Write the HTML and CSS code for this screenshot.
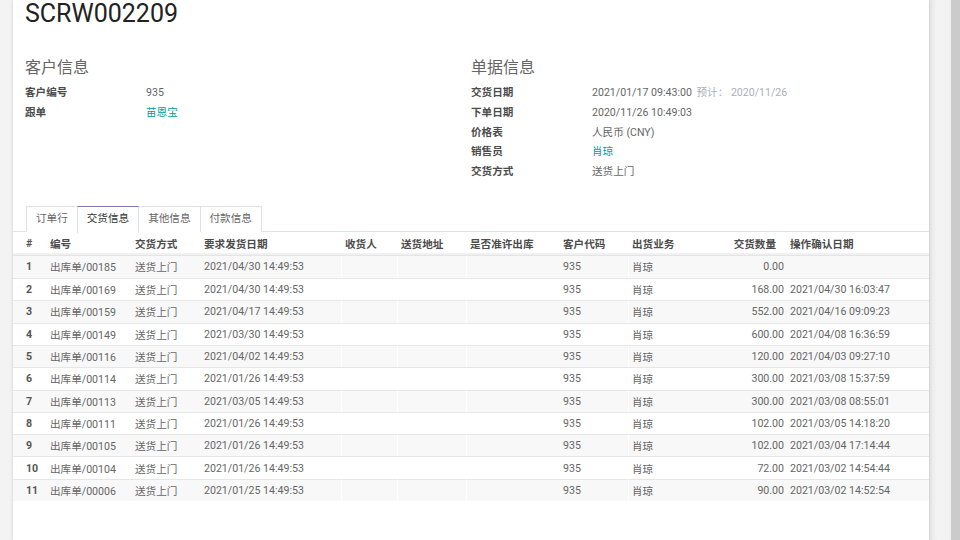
FILE: index.html
```html
<!DOCTYPE html>
<html lang="zh-CN">
<head>
<meta charset="utf-8">
<title>SCRW002209</title>
<link rel="stylesheet" href="styles.css">
</head>
<body>
<div class="frame">
  <div class="gutter-left"></div>
  <main class="sheet">
    <h1 class="title">SCRW002209</h1>
    <div class="groups">
      <section class="group">
        <h2 class="group-title">客户信息</h2>
        <div class="field"><span class="label">客户编号</span><span class="value">935</span></div>
        <div class="field"><span class="label">跟单</span><span class="value link">苗恩宝</span></div>
      </section>
      <section class="group">
        <h2 class="group-title">单据信息</h2>
        <div class="field"><span class="label">交货日期</span><span class="value">2021/01/17 09:43:00 <span class="muted">预计：&nbsp;2020/11/26</span></span></div>
        <div class="field"><span class="label">下单日期</span><span class="value">2020/11/26 10:49:03</span></div>
        <div class="field"><span class="label">价格表</span><span class="value">人民币 (CNY)</span></div>
        <div class="field"><span class="label">销售员</span><span class="value link">肖琼</span></div>
        <div class="field"><span class="label">交货方式</span><span class="value">送货上门</span></div>
      </section>
    </div>

    <ul class="tabs">
      <li class="tab">订单行</li>
      <li class="tab active">交货信息</li>
      <li class="tab">其他信息</li>
      <li class="tab">付款信息</li>
    </ul>

    <table class="grid">
      <colgroup>
        <col style="width:34px"><col style="width:85px"><col style="width:69px"><col style="width:141px">
        <col style="width:56px"><col style="width:69px"><col style="width:93px"><col style="width:69px">
        <col style="width:71px"><col style="width:87px"><col style="width:142px">
      </colgroup>
      <thead>
        <tr>
          <th class="c-no">#</th><th>编号</th><th>交货方式</th><th>要求发货日期</th><th>收货人</th><th>送货地址</th><th>是否准许出库</th><th>客户代码</th><th>出货业务</th><th class="num num-h">交货数量</th><th>操作确认日期</th>
        </tr>
      </thead>
      <tbody>
        <tr><td class="c-no">1</td><td>出库单/00185</td><td>送货上门</td><td>2021/04/30 14:49:53</td><td></td><td></td><td></td><td>935</td><td>肖琼</td><td class="num">0.00</td><td></td></tr>
        <tr><td class="c-no">2</td><td>出库单/00169</td><td>送货上门</td><td>2021/04/30 14:49:53</td><td></td><td></td><td></td><td>935</td><td>肖琼</td><td class="num">168.00</td><td>2021/04/30 16:03:47</td></tr>
        <tr><td class="c-no">3</td><td>出库单/00159</td><td>送货上门</td><td>2021/04/17 14:49:53</td><td></td><td></td><td></td><td>935</td><td>肖琼</td><td class="num">552.00</td><td>2021/04/16 09:09:23</td></tr>
        <tr><td class="c-no">4</td><td>出库单/00149</td><td>送货上门</td><td>2021/03/30 14:49:53</td><td></td><td></td><td></td><td>935</td><td>肖琼</td><td class="num">600.00</td><td>2021/04/08 16:36:59</td></tr>
        <tr><td class="c-no">5</td><td>出库单/00116</td><td>送货上门</td><td>2021/04/02 14:49:53</td><td></td><td></td><td></td><td>935</td><td>肖琼</td><td class="num">120.00</td><td>2021/04/03 09:27:10</td></tr>
        <tr><td class="c-no">6</td><td>出库单/00114</td><td>送货上门</td><td>2021/01/26 14:49:53</td><td></td><td></td><td></td><td>935</td><td>肖琼</td><td class="num">300.00</td><td>2021/03/08 15:37:59</td></tr>
        <tr><td class="c-no">7</td><td>出库单/00113</td><td>送货上门</td><td>2021/03/05 14:49:53</td><td></td><td></td><td></td><td>935</td><td>肖琼</td><td class="num">300.00</td><td>2021/03/08 08:55:01</td></tr>
        <tr><td class="c-no">8</td><td>出库单/00111</td><td>送货上门</td><td>2021/01/26 14:49:53</td><td></td><td></td><td></td><td>935</td><td>肖琼</td><td class="num">102.00</td><td>2021/03/05 14:18:20</td></tr>
        <tr><td class="c-no">9</td><td>出库单/00105</td><td>送货上门</td><td>2021/01/26 14:49:53</td><td></td><td></td><td></td><td>935</td><td>肖琼</td><td class="num">102.00</td><td>2021/03/04 17:14:44</td></tr>
        <tr><td class="c-no">10</td><td>出库单/00104</td><td>送货上门</td><td>2021/01/26 14:49:53</td><td></td><td></td><td></td><td>935</td><td>肖琼</td><td class="num">72.00</td><td>2021/03/02 14:54:44</td></tr>
        <tr><td class="c-no">11</td><td>出库单/00006</td><td>送货上门</td><td>2021/01/25 14:49:53</td><td></td><td></td><td></td><td>935</td><td>肖琼</td><td class="num">90.00</td><td>2021/03/02 14:52:54</td></tr>
      </tbody>
    </table>
  </main>
  <div class="gutter-right"></div>
  <div class="scrollbar"></div>
</div>
</body>
</html>
```

FILE: styles.css
```css
* { box-sizing: border-box; }
html, body { margin: 0; padding: 0; }
body {
  width: 960px;
  height: 540px;
  overflow: hidden;
  background: #f2f2f2;
  font-family: Roboto, "Noto Sans CJK SC", sans-serif;
  font-size: 10.6px;
  color: #666;
}
.frame {
  display: flex;
  height: 540px;
}
.gutter-left {
  width: 13px;
  flex: none;
  background: #f3f3f3;
}
.sheet {
  width: 916px;
  flex: none;
  background: #fff;
  box-shadow: 0 0 3px rgba(0,0,0,0.18);
  padding: 0 12px;
  position: relative;
  z-index: 1;
}
.gutter-right {
  width: 22px;
  flex: none;
  background: linear-gradient(to right, #e6e6e6, #f4f4f4 40%, #f1f1f1);
}
.scrollbar {
  width: 9px;
  flex: none;
  background: #cbcbcb;
}
.title {
  margin: 0;
  font-size: 25px;
  line-height: 28px;
  font-weight: 400;
  color: #222;
}
.groups {
  display: flex;
  margin-top: 30px;
}
.group {
  width: 446px;
}
.group-title {
  margin: 0 0 5px;
  font-size: 16px;
  line-height: 20px;
  font-weight: 400;
  color: #666;
}
.field {
  display: flex;
  line-height: 19.75px;
}
.label {
  width: 121px;
  flex: none;
  font-weight: 700;
  color: #4c4c4c;
}
.value { color: #666; }
.link { color: #00a09d; }
.muted { color: #a9b0bb; margin-left: 2px; }

.tabs {
  list-style: none;
  display: flex;
  margin: 24px -12px 0;
  padding: 0 0 0 13px;
  border-bottom: 1px solid #dee2e6;
  height: 26px;
}
.tab {
  height: 26px;
  padding: 0 9px;
  line-height: 24px;
  border: 1px solid #dee2e6;
  border-bottom: none;
  margin-right: -1px;
  color: #666;
  background: #fff;
}
.tab.active {
  border-top-color: #7c7bad;
  color: #333;
  position: relative;
  height: 27px;
  z-index: 1;
}

.grid {
  margin: 0 -12px;
  width: 916px;
  border-collapse: separate;
  border-spacing: 0;
  table-layout: fixed;
}
.grid th, .grid td {
  padding: 0 3px;
  text-align: left;
  white-space: nowrap;
  overflow: hidden;
}
.grid th {
  height: 24px;
  font-weight: 700;
  color: #4c4c4c;
  border-bottom: 1px solid #e4e4e4;
  box-shadow: inset 0 -2px 0 #f1f1f4;
}
.grid td {
  height: 22.3px;
  border-top: 1px solid #e6e6e9;
  color: #666;
}
.grid tbody tr:nth-child(odd) td { background: #f8f8f8; }
.grid tbody tr:first-child td { border-top: none; }
.grid tbody tr:nth-child(odd) td:nth-child(4),
.grid tbody tr:nth-child(odd) td:nth-child(5),
.grid tbody tr:nth-child(odd) td:nth-child(6),
.grid tbody tr:nth-child(odd) td:nth-child(8) {
  border-right: 1px solid #fff;
}
.grid .c-no {
  padding-left: 13px;
  font-weight: 700;
  color: #555;
}
.grid .num { text-align: right; }
.grid .num-h { padding-right: 11px; }
```
